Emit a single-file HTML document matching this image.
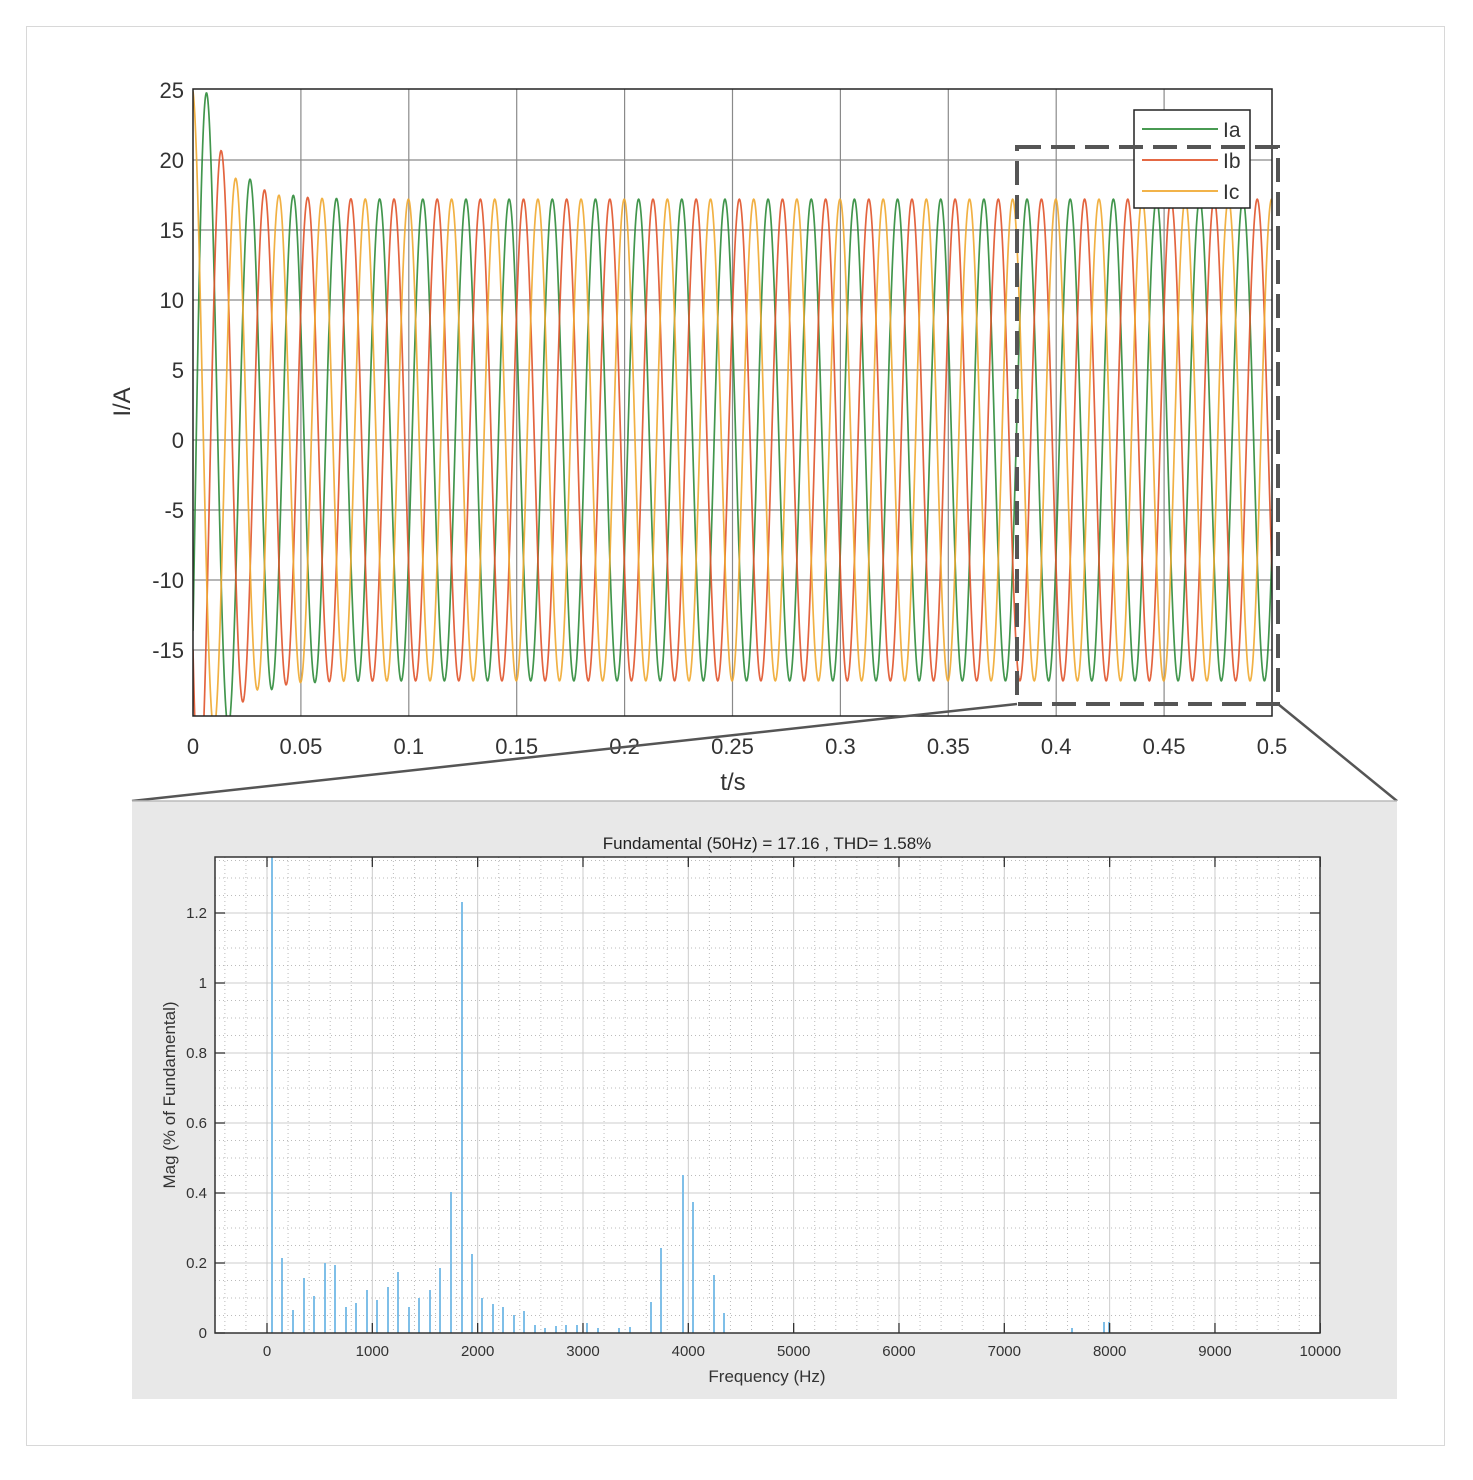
<!DOCTYPE html>
<html><head><meta charset="utf-8"><style>
html,body{margin:0;padding:0;background:#fff;}
body{width:1473px;height:1480px;position:relative;overflow:hidden;font-family:"Liberation Sans",Arial,sans-serif;}
</style></head><body>
<svg id="s" width="1473" height="1480" xmlns="http://www.w3.org/2000/svg" style="position:absolute;left:0;top:0">
<rect x="26.5" y="26.5" width="1418" height="1419" fill="#fff" stroke="#d8d8d8"/>
<g id="gtop"></g>
<g id="gbot"></g>
</svg>
<script>
(function(){
var NS="http://www.w3.org/2000/svg";
function el(p,t,a,txt){var e=document.createElementNS(NS,t);for(var k in a)e.setAttribute(k,a[k]);if(txt!==undefined)e.textContent=txt;p.appendChild(e);return e;}
var gTop=document.getElementById('gtop'),gBot=document.getElementById('gbot');
var X0=193,X1=1272,Y0=89,Y1=716;
function tx(t){return X0+t*(X1-X0)/0.5;}
function ty(v){return 90+(25-v)*14;}
el(gTop,'rect',{x:X0,y:Y0,width:X1-X0,height:Y1-Y0,fill:'#fff'});
for(var i=1;i<10;i++){var x=tx(i*0.05);el(gTop,'line',{x1:x,y1:Y0,x2:x,y2:Y1,stroke:'#8a8a8a','stroke-width':1.2});}
for(var v=-15;v<=20;v+=5){var y=ty(v);el(gTop,'line',{x1:X0,y1:y,x2:X1,y2:y,stroke:'#8a8a8a','stroke-width':1.2});}
var cols=['#2e8b3a','#e0532a','#f0a830'];
var phi=-0.47;
var clip=el(gTop,'clipPath',{id:'cp'});el(clip,'rect',{x:X0,y:Y0,width:X1-X0,height:Y1-Y0});
var wg=el(gTop,'g',{'clip-path':'url(#cp)'});
for(var c=0;c<3;c++){
 var d='';
 for(var px=0;px<=1079*3;px++){
  var t=px/3/2158;
  var env=17.2*(1+0.75*Math.exp(-t/0.012)*(c==0?1:(c==1?0.8:0.6)));
  var vv=env*Math.sin(2*Math.PI*50*t+phi-c*2*Math.PI/3);
  d+=(px?'L':'M')+tx(t).toFixed(2)+' '+ty(vv).toFixed(2);
 }
 el(wg,'path',{d:d,fill:'none',stroke:cols[c],'stroke-width':1.7,opacity:0.9});
}
el(gTop,'rect',{x:X0,y:Y0,width:X1-X0,height:Y1-Y0,fill:'none',stroke:'#222','stroke-width':1.5});
[25,20,15,10,5,0,-5,-10,-15].forEach(function(v){el(gTop,'text',{x:184,y:ty(v)+8,'text-anchor':'end','font-size':22,fill:'#333'},String(v));});
['0','0.05','0.1','0.15','0.2','0.25','0.3','0.35','0.4','0.45','0.5'].forEach(function(s,i){el(gTop,'text',{x:tx(i*0.05),y:754,'text-anchor':'middle','font-size':22,fill:'#333'},s);});
el(gTop,'text',{x:733,y:790,'text-anchor':'middle','font-size':24,fill:'#333'},'t/s');
el(gTop,'text',{x:130,y:402,'text-anchor':'middle','font-size':24,fill:'#333',transform:'rotate(-90 130 402)'},'I/A');
el(gTop,'rect',{x:1134,y:110,width:116,height:98,fill:'#fff',stroke:'#222','stroke-width':1.5});
['Ia','Ib','Ic'].forEach(function(s,i){var y=129+i*31;el(gTop,'line',{x1:1142,y1:y,x2:1218,y2:y,stroke:cols[i],'stroke-width':1.7});el(gTop,'text',{x:1223,y:y+8,'font-size':21,fill:'#333'},s);});
el(gTop,'rect',{x:1017,y:147,width:261,height:557,fill:'none',stroke:'#555','stroke-width':4,'stroke-dasharray':'24 10'});
el(gBot,'rect',{x:132,y:801,width:1265,height:598,fill:'#e8e8e8'});
el(gBot,'line',{x1:132,y1:801,x2:1397,y2:801,stroke:'#bbb','stroke-width':1.5});
el(gTop,'line',{x1:1017,y1:704,x2:132,y2:801,stroke:'#555','stroke-width':2.5});
el(gTop,'line',{x1:1278,y1:704,x2:1397,y2:801,stroke:'#555','stroke-width':2.5});
var BX0=215,BX1=1320,BY0=857,BY1=1333;
function fx(f){return 267+f*0.10533;}
function fy(v){return 1333-v*350;}
el(gBot,'rect',{x:BX0,y:BY0,width:BX1-BX0,height:BY1-BY0,fill:'#fff'});
for(var f=-400;f<10000;f+=200){if(f%1000==0)continue;var x=fx(f);el(gBot,'line',{x1:x,y1:BY0,x2:x,y2:BY1,stroke:'#bbb','stroke-width':1,'stroke-dasharray':'1 3'});}
for(var k=1;k<=27;k++){if(k%4==0)continue;var y=fy(k*0.05);el(gBot,'line',{x1:BX0,y1:y,x2:BX1,y2:y,stroke:'#bbb','stroke-width':1,'stroke-dasharray':'1 3'});}
for(var f=0;f<10000;f+=1000){var x=fx(f);el(gBot,'line',{x1:x,y1:BY0,x2:x,y2:BY1,stroke:'#ccc','stroke-width':1});}
for(var k=1;k<=6;k++){var y=fy(k*0.2);el(gBot,'line',{x1:BX0,y1:y,x2:BX1,y2:y,stroke:'#ccc','stroke-width':1});}
var bars=[[272,857],[282,1258],[293,1310],[304,1278],[314,1296],[325,1263],[335,1265],[346,1307],[356,1303],[367,1290],[377,1300],[388,1287],[398,1272],[409,1307],[419,1298],[430,1290],[440,1268],[451,1192],[462,902],[472,1254],[482,1298],[493,1304],[503,1307],[514,1315],[524,1311],[535,1325],[545,1328],[556,1326],[566,1325],[577,1325],[587,1323],[598,1328],[619,1328],[630,1327],[651,1302],[661,1248],[683,1175],[693,1202],[714,1275],[724,1313],[1072,1328],[1104,1322],[1109,1322]];
bars.forEach(function(b){el(gBot,'line',{x1:b[0],y1:b[1],x2:b[0],y2:BY1,stroke:'#7fbfe8','stroke-width':2});});
el(gBot,'rect',{x:BX0,y:BY0,width:BX1-BX0,height:BY1-BY0,fill:'none',stroke:'#333','stroke-width':1.5});
for(var f=0;f<=10000;f+=1000){var x=fx(f);el(gBot,'line',{x1:x,y1:BY1,x2:x,y2:BY1-10,stroke:'#333','stroke-width':1.3});el(gBot,'line',{x1:x,y1:BY0,x2:x,y2:BY0+10,stroke:'#333','stroke-width':1.3});el(gBot,'text',{x:x,y:1356,'text-anchor':'middle','font-size':15,fill:'#333'},String(f));}
['0','0.2','0.4','0.6','0.8','1','1.2'].forEach(function(s,i){var y=fy(i*0.2);el(gBot,'line',{x1:BX0,y1:y,x2:BX0+10,y2:y,stroke:'#333','stroke-width':1.3});el(gBot,'line',{x1:BX1,y1:y,x2:BX1-10,y2:y,stroke:'#333','stroke-width':1.3});el(gBot,'text',{x:207,y:y+5,'text-anchor':'end','font-size':15,fill:'#333'},s);});
el(gBot,'text',{x:767,y:849,'text-anchor':'middle','font-size':17,fill:'#222'},'Fundamental (50Hz) = 17.16 , THD= 1.58%');
el(gBot,'text',{x:767,y:1382,'text-anchor':'middle','font-size':17,fill:'#333'},'Frequency (Hz)');
el(gBot,'text',{x:175,y:1095,'text-anchor':'middle','font-size':17,fill:'#333',transform:'rotate(-90 175 1095)'},'Mag (% of Fundamental)');
})();
</script>
</body></html>
